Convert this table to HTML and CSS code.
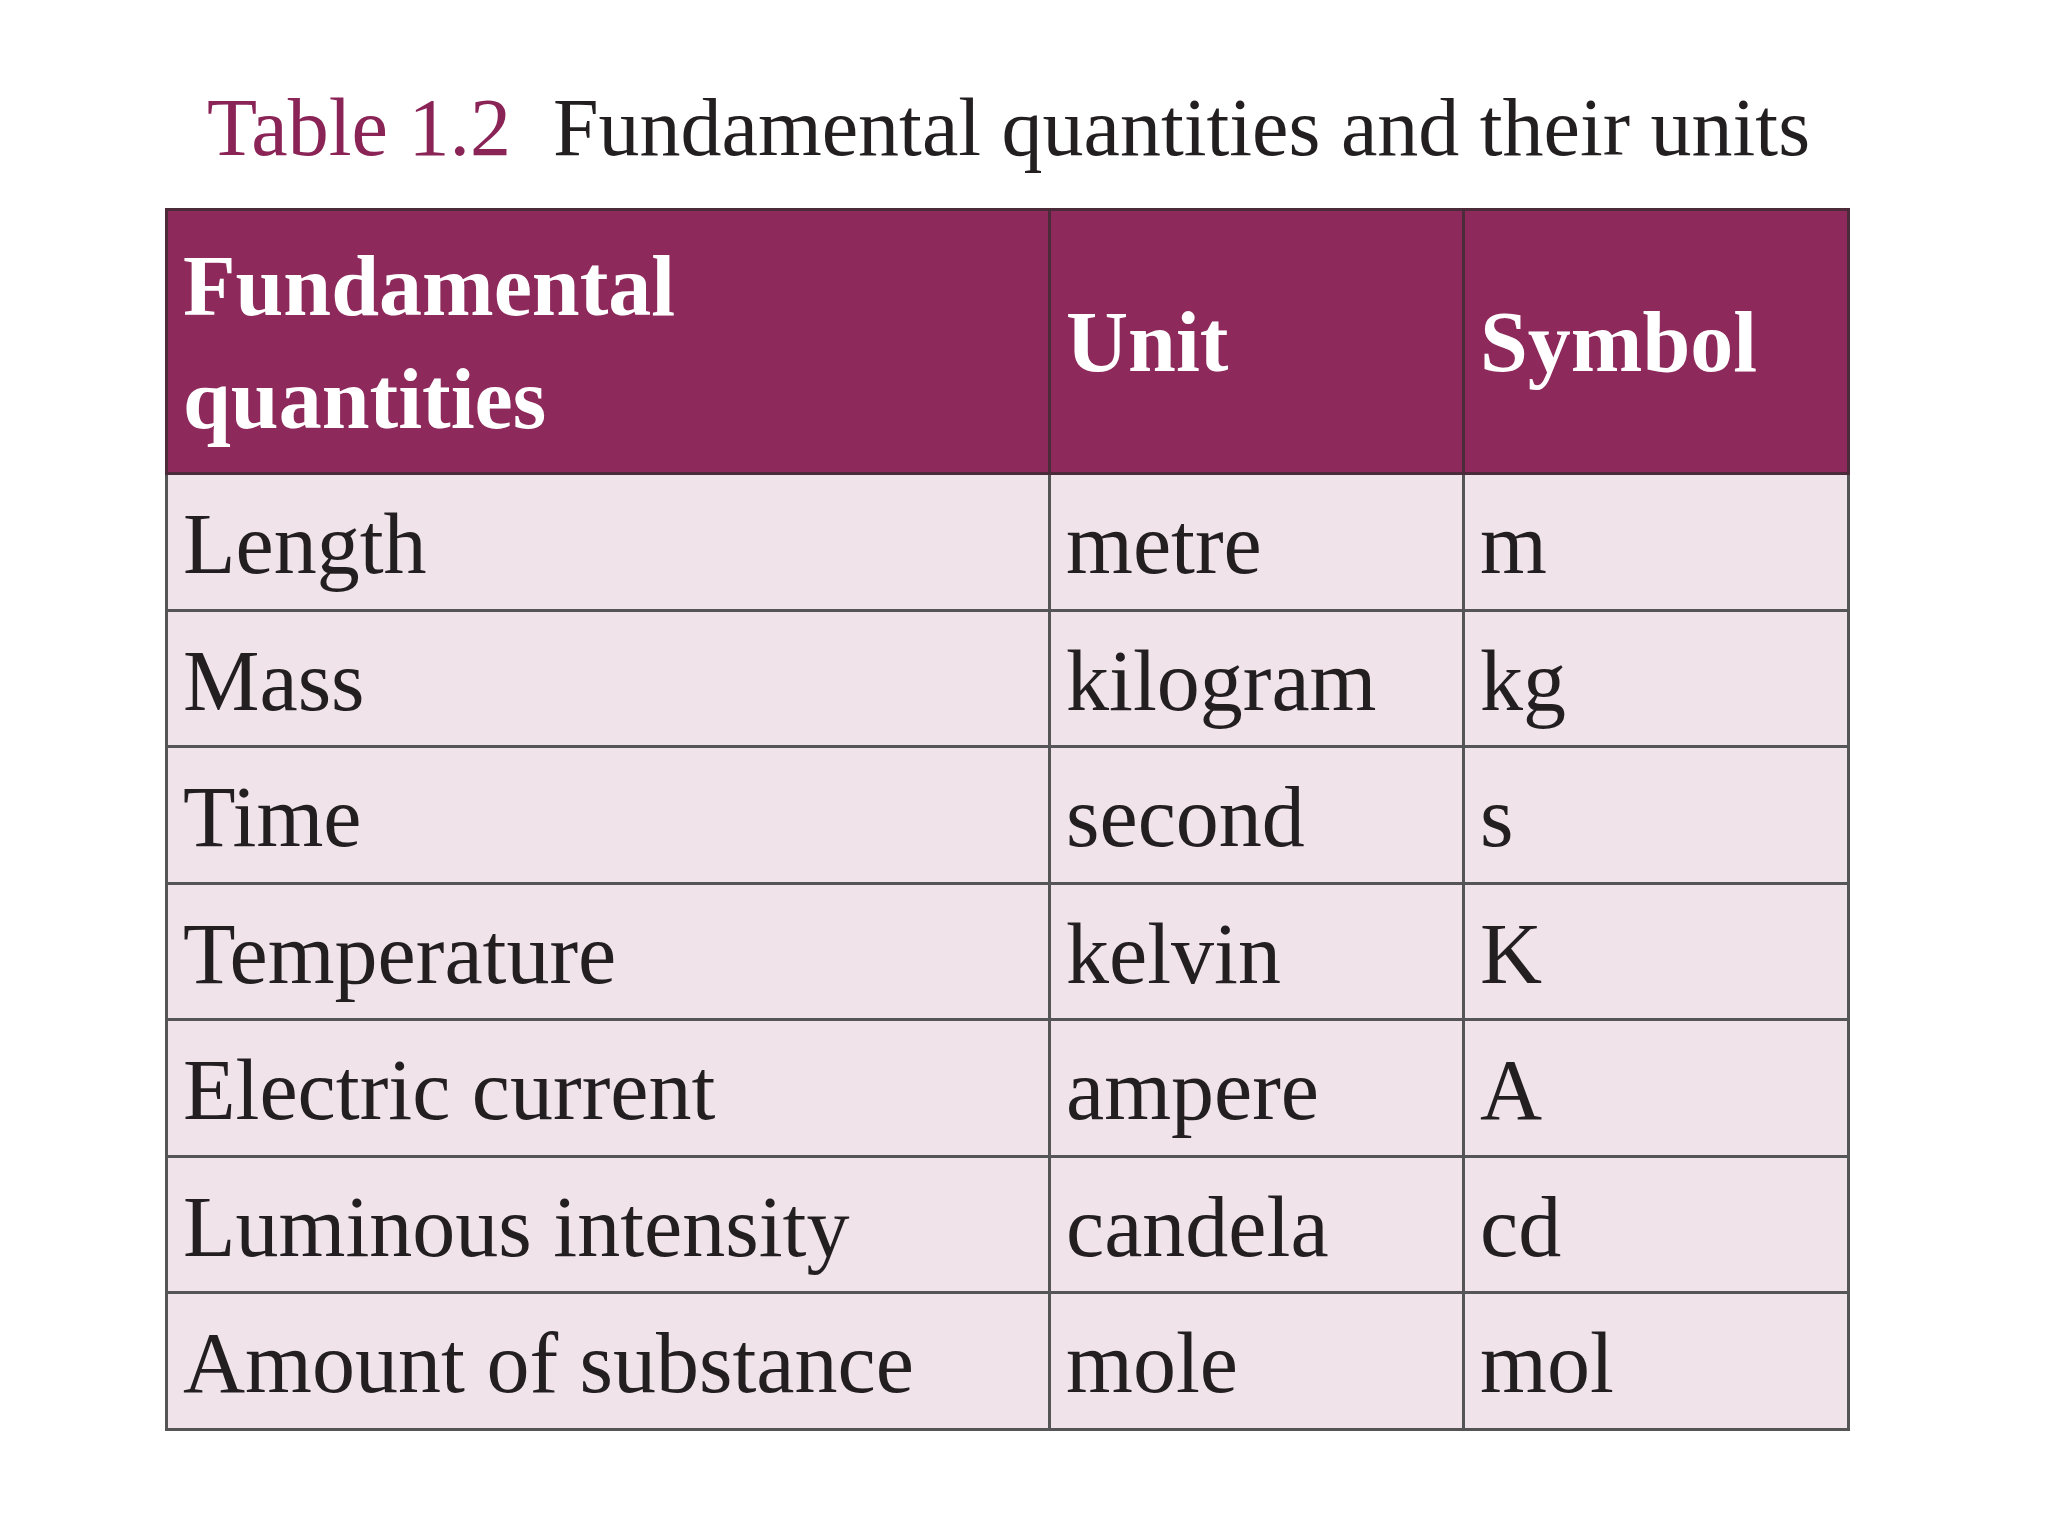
FILE: index.html
```html
<!DOCTYPE html>
<html lang="en">
<head>
<meta charset="utf-8">
<title>Table 1.2 Fundamental quantities and their units</title>
<link rel="stylesheet" href="styles.css">
</head>
<body>
<div class="page">
  <h1 class="caption"><span class="label">Table 1.2</span><span class="caption-text">Fundamental quantities and their units</span></h1>
  <table class="units">
    <colgroup>
      <col class="c1">
      <col class="c2">
      <col class="c3">
    </colgroup>
    <thead>
      <tr>
        <th>Fundamental<br>quantities</th>
        <th>Unit</th>
        <th>Symbol</th>
      </tr>
    </thead>
    <tbody>
      <tr><td>Length</td><td>metre</td><td>m</td></tr>
      <tr><td>Mass</td><td>kilogram</td><td>kg</td></tr>
      <tr><td>Time</td><td>second</td><td>s</td></tr>
      <tr><td>Temperature</td><td>kelvin</td><td>K</td></tr>
      <tr><td>Electric current</td><td>ampere</td><td>A</td></tr>
      <tr><td>Luminous intensity</td><td>candela</td><td>cd</td></tr>
      <tr><td>Amount of substance</td><td>mole</td><td>mol</td></tr>
    </tbody>
  </table>
</div>
</body>
</html>
```

FILE: styles.css
```css
html, body {
  margin: 0;
  padding: 0;
  background: #ffffff;
}

body {
  font-family: "Liberation Serif", "Times New Roman", serif;
  color: #231f20;
}

.page {
  padding: 87px 0 0 165px;
}

.caption {
  margin: 0 0 39px 42px;
  font-size: 82px;
  line-height: 82px;
  font-weight: normal;
  color: #231f20;
  white-space: nowrap;
}

.label {
  color: #8a2456;
  margin-right: 42px;
}

.units {
  border-collapse: collapse;
  table-layout: fixed;
  width: 1682px;
  border: 3px solid #3f3f3f;
}

.c1 { width: 883px; }
.c2 { width: 414px; }
.c3 { width: 385px; }

.units th,
.units td {
  border: 3px solid #555555;
  text-align: left;
  vertical-align: middle;
  font-size: 86px;
  line-height: 113px;
  padding: 0 0 0 15px;
  white-space: nowrap;
}

.units th {
  background: #8e295c;
  color: #ffffff;
  font-weight: bold;
  height: 259px;
  padding-top: 2px;
  border-color: #4b2a3a;
}

.units td {
  background: #f0e4ea;
  height: 127.5px;
  padding-top: 6px;
}
```
